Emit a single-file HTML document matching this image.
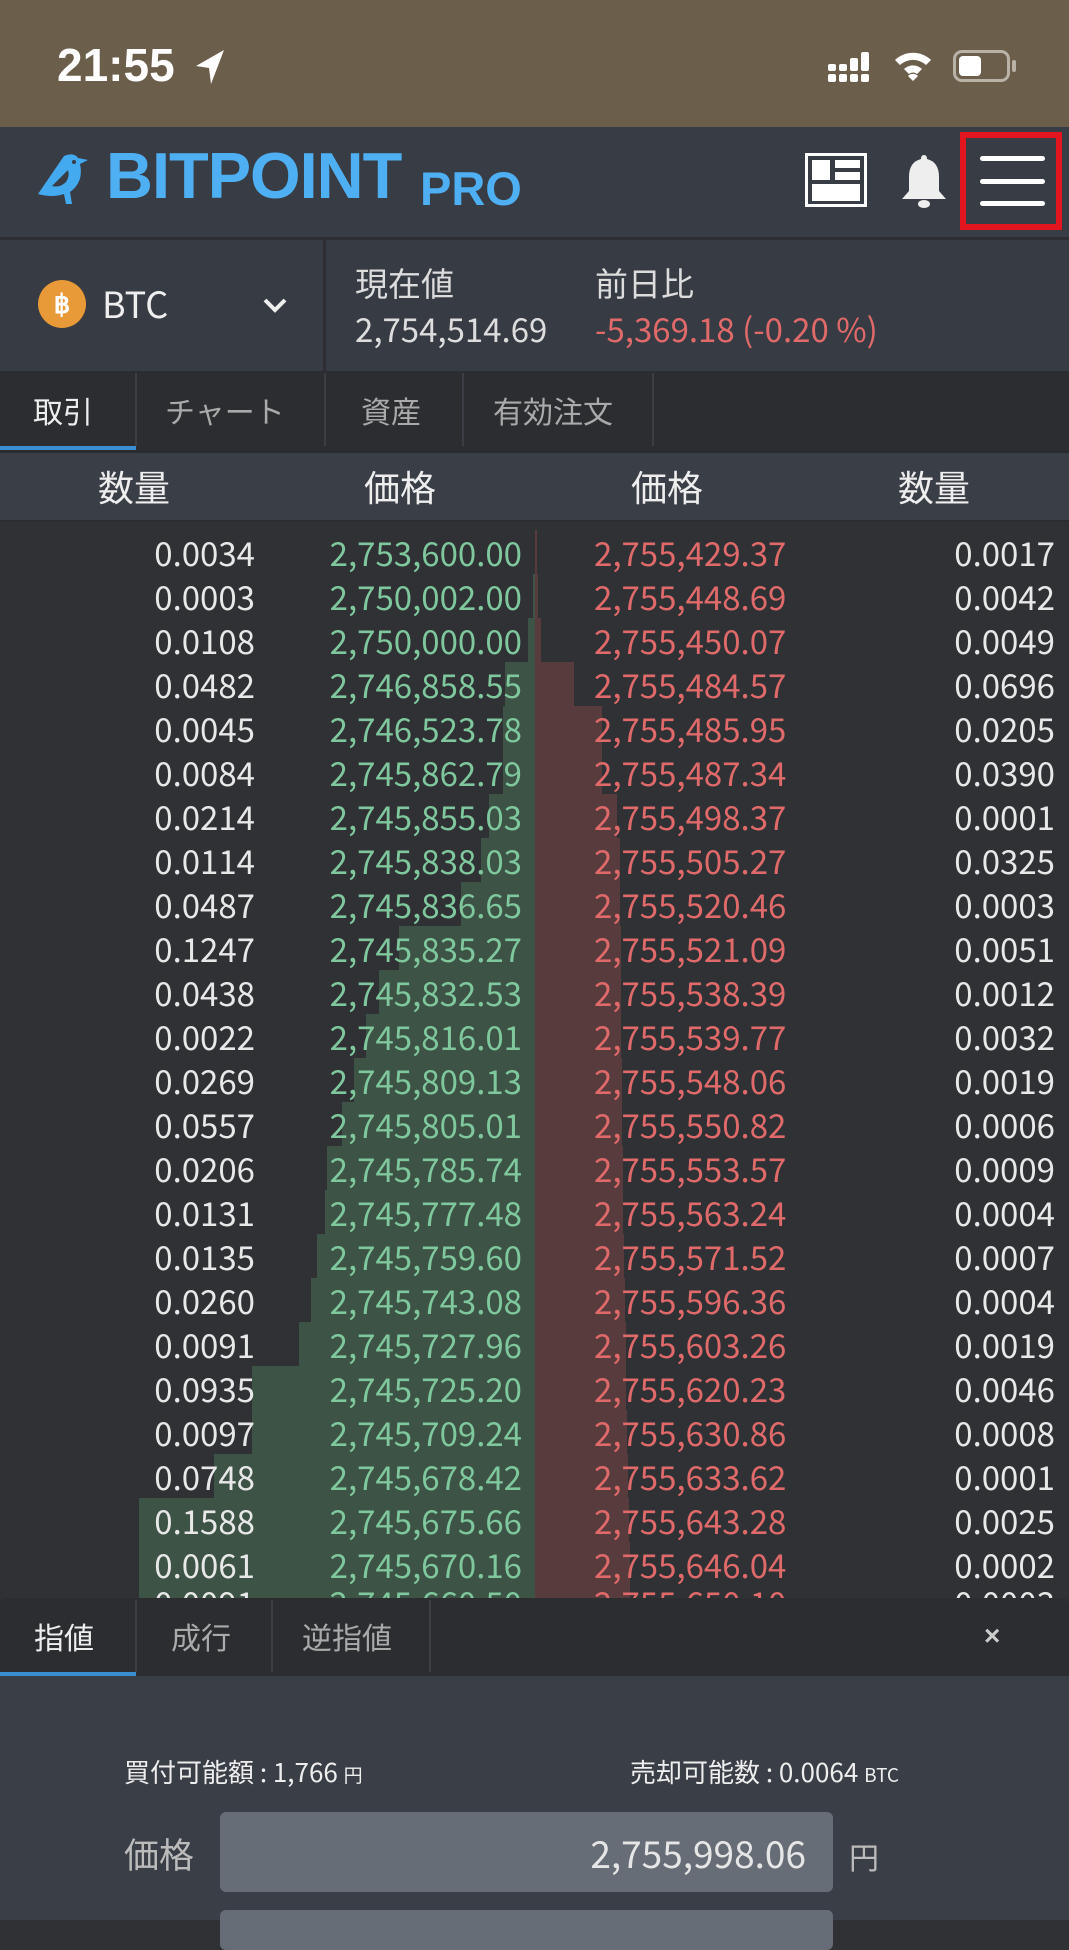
<!DOCTYPE html>
<html><head><meta charset="utf-8"><style>
*{margin:0;padding:0;box-sizing:border-box}
body{width:1069px;height:1920px;overflow:hidden;background:#2f3135;font-family:"Noto Sans CJK JP","Liberation Sans",sans-serif;color:#e8e8e8;position:relative}
.a{position:absolute;white-space:nowrap}
.row{position:absolute;left:0;width:1069px;height:44px;font-size:33px;line-height:44px}
.row .q{position:absolute;right:814px}
.row .g{position:absolute;right:547px;color:#7fc79c}
.row .r{position:absolute;left:594px;color:#e06a6a}
.row .q2{position:absolute;right:14px}
.gb{position:absolute;right:534px;height:44px;background:#3d5346}
.rb{position:absolute;left:535px;height:44px;background:#573b3d}
</style></head><body>
<div class="a" style="left:0;top:0;width:1069px;height:127px;background:#6b5e4b"></div>
<div class="a" style="left:57px;top:38px;font:bold 46px 'Liberation Sans',sans-serif;color:#fff">21:55</div>
<svg class="a" style="left:192px;top:48px" width="34" height="38" viewBox="0 0 34 38"><path d="M32 2 L4 18 L17 20 L19 36 Z" fill="#fff"/></svg>
<svg class="a" style="left:828px;top:50px" width="54" height="34"><g fill="#fff"><rect x="0" y="14" width="8" height="7" rx="2"/><rect x="0" y="24" width="8" height="8" rx="2"/><rect x="11" y="14" width="8" height="7" rx="2"/><rect x="11" y="24" width="8" height="8" rx="2"/><rect x="22" y="8" width="8" height="13" rx="2"/><rect x="22" y="24" width="8" height="8" rx="2"/><rect x="33" y="2" width="8" height="19" rx="2"/><rect x="33" y="24" width="8" height="8" rx="2"/></g></svg>
<svg class="a" style="left:893px;top:48px" width="40" height="34" viewBox="0 0 40 34"><path d="M2 12 A26 26 0 0 1 38 12 L33 17 A19 19 0 0 0 7 17 Z M11 21 A13 13 0 0 1 29 21 L24 26 A6 6 0 0 0 16 26 Z M20 33 L15 28 A7 7 0 0 1 25 28 Z" fill="#fff"/></svg>
<div class="a" style="left:953px;top:50px;width:57px;height:32px;border:3px solid #b9b2a6;border-radius:9px"></div>
<div class="a" style="left:959px;top:56px;width:22px;height:20px;background:#fff;border-radius:4px"></div>
<div class="a" style="left:1012px;top:60px;width:4px;height:12px;background:#b9b2a6;border-radius:2px"></div>

<div class="a" style="left:0;top:127px;width:1069px;height:110px;background:#383c44"></div>
<svg class="a" style="left:34px;top:152px" width="58" height="58" viewBox="0 0 58 58"><path d="M30 4 Q40 0 44 6 L54 8 L46 12 Q50 30 36 40 L38 52 L32 52 L30 42 Q18 46 4 42 Z M18 34 Q26 36 32 30 Q36 24 34 18 Z" fill="#44aaf0" fill-rule="evenodd"/><circle cx="40" cy="10" r="2" fill="#383c44"/></svg>
<div class="a" style="left:106px;top:138px;font:bold 65px 'Liberation Sans',sans-serif;color:#4eb0f2;letter-spacing:-1px">BITPOINT</div>
<div class="a" style="left:420px;top:161px;font:bold 47px 'Liberation Sans',sans-serif;color:#4eb0f2">PRO</div>
<div class="a" style="left:805px;top:153px;width:62px;height:54px;border:3px solid #fff;background:#383c44"></div>
<div class="a" style="left:812px;top:160px;width:18px;height:20px;background:#fff"></div>
<div class="a" style="left:835px;top:160px;width:25px;height:8px;background:#fff"></div>
<div class="a" style="left:835px;top:172px;width:25px;height:8px;background:#fff"></div>
<div class="a" style="left:812px;top:184px;width:48px;height:17px;background:#fff"></div>
<svg class="a" style="left:899px;top:153px" width="50" height="60" viewBox="0 0 50 60"><path d="M25 2 Q28 2 28 6 Q40 9 40 24 L40 38 L47 46 L3 46 L10 38 L10 24 Q10 9 22 6 Q22 2 25 2 Z" fill="#eee"/><ellipse cx="25" cy="51" rx="6" ry="4" fill="#eee"/></svg>
<div class="a" style="left:960px;top:132px;width:102px;height:98px;border:6px solid #e3161f"></div>
<div class="a" style="left:980px;top:156px;width:65px;height:5px;background:#fff;border-radius:3px"></div>
<div class="a" style="left:980px;top:179px;width:65px;height:5px;background:#fff;border-radius:3px"></div>
<div class="a" style="left:980px;top:201px;width:65px;height:5px;background:#fff;border-radius:3px"></div>

<div class="a" style="left:0;top:237px;width:1069px;height:134px;background:#373b43;border-top:3px solid #2c2e33"></div>
<div class="a" style="left:323px;top:240px;width:3px;height:131px;background:#2c2e33"></div>
<div class="a" style="left:38px;top:280px;width:48px;height:48px;border-radius:50%;background:#e89a38;color:#fff;font:bold 26px 'Liberation Sans',sans-serif;text-align:center;line-height:48px">฿</div>
<div class="a" style="left:102px;top:281px;font-size:36px;line-height:44px;color:#eee">BTC</div>
<svg class="a" style="left:262px;top:297px" width="26" height="18"><path d="M3 3 L13 13 L23 3" stroke="#eee" stroke-width="4" fill="none"/></svg>
<div class="a" style="left:355px;top:260px;font-size:33px;line-height:44px;color:#ddd">現在値</div>
<div class="a" style="left:355px;top:306px;font-size:33px;line-height:44px;color:#ddd">2,754,514.69</div>
<div class="a" style="left:595px;top:260px;font-size:33px;line-height:44px;color:#ddd">前日比</div>
<div class="a" style="left:595px;top:306px;font-size:33px;line-height:44px;color:#e06a6a">-5,369.18 (-0.20 %)</div>

<div class="a" style="left:0;top:371px;width:1069px;height:79px;background:#2b2d31"></div>
<div class="a" style="left:0;top:446px;width:136px;height:4px;background:#3a8fd0"></div>
<div class="a" style="left:135px;top:373px;width:2px;height:73px;background:#3b3e44"></div>
<div class="a" style="left:324px;top:373px;width:2px;height:73px;background:#3b3e44"></div>
<div class="a" style="left:462px;top:373px;width:2px;height:73px;background:#3b3e44"></div>
<div class="a" style="left:652px;top:373px;width:2px;height:73px;background:#3b3e44"></div>
<div class="a" style="left:33px;top:388px;font-size:30px;line-height:44px;color:#eee">取引</div>
<div class="a" style="left:165px;top:388px;font-size:30px;line-height:44px;color:#aaa">チャート</div>
<div class="a" style="left:361px;top:388px;font-size:30px;line-height:44px;color:#aaa">資産</div>
<div class="a" style="left:493px;top:388px;font-size:30px;line-height:44px;color:#aaa">有効注文</div>

<div class="a" style="left:0;top:450px;width:1069px;height:72px;background:#3a3e46;border-top:3px solid #2a2c30;border-bottom:2px solid #2a2c30"></div>
<div class="a" style="left:98px;top:462px;font-size:36px;line-height:48px;color:#eee">数量</div>
<div class="a" style="left:364px;top:462px;font-size:36px;line-height:48px;color:#eee">価格</div>
<div class="a" style="left:631px;top:462px;font-size:36px;line-height:48px;color:#eee">価格</div>
<div class="a" style="left:898px;top:462px;font-size:36px;line-height:48px;color:#eee">数量</div>

<div class="gb" style="top:574px;width:2px"></div>
<div class="gb" style="top:618px;width:7px"></div>
<div class="gb" style="top:662px;width:30px"></div>
<div class="gb" style="top:706px;width:32px"></div>
<div class="gb" style="top:750px;width:32px"></div>
<div class="gb" style="top:794px;width:46px"></div>
<div class="gb" style="top:838px;width:54px"></div>
<div class="gb" style="top:882px;width:74px"></div>
<div class="gb" style="top:926px;width:136px"></div>
<div class="gb" style="top:970px;width:156px"></div>
<div class="gb" style="top:1014px;width:169px"></div>
<div class="gb" style="top:1058px;width:181px"></div>
<div class="gb" style="top:1102px;width:193px"></div>
<div class="gb" style="top:1146px;width:208px"></div>
<div class="gb" style="top:1190px;width:210px"></div>
<div class="gb" style="top:1234px;width:218px"></div>
<div class="gb" style="top:1278px;width:224px"></div>
<div class="gb" style="top:1322px;width:236px"></div>
<div class="gb" style="top:1366px;width:283px"></div>
<div class="gb" style="top:1410px;width:283px"></div>
<div class="gb" style="top:1454px;width:321px"></div>
<div class="gb" style="top:1498px;width:396px"></div>
<div class="gb" style="top:1542px;width:396px;height:56px"></div>
<div class="rb" style="top:530px;width:2px"></div>
<div class="rb" style="top:574px;width:3px"></div>
<div class="rb" style="top:618px;width:6px"></div>
<div class="rb" style="top:662px;width:39px"></div>
<div class="rb" style="top:706px;width:67px"></div>
<div class="rb" style="top:750px;width:67px"></div>
<div class="rb" style="top:794px;width:82px"></div>
<div class="rb" style="top:838px;width:85px"></div>
<div class="rb" style="top:882px;width:85px"></div>
<div class="rb" style="top:926px;width:86px"></div>
<div class="rb" style="top:970px;width:86px"></div>
<div class="rb" style="top:1014px;width:86px"></div>
<div class="rb" style="top:1058px;width:87px"></div>
<div class="rb" style="top:1102px;width:87px"></div>
<div class="rb" style="top:1146px;width:88px"></div>
<div class="rb" style="top:1190px;width:88px"></div>
<div class="rb" style="top:1234px;width:89px"></div>
<div class="rb" style="top:1278px;width:90px"></div>
<div class="rb" style="top:1322px;width:91px"></div>
<div class="rb" style="top:1366px;width:91px"></div>
<div class="rb" style="top:1410px;width:92px"></div>
<div class="rb" style="top:1454px;width:93px"></div>
<div class="rb" style="top:1498px;width:94px"></div>
<div class="rb" style="top:1542px;width:95px;height:56px"></div>

<div class="row" style="top:530px"><span class="q">0.0034</span><span class="g">2,753,600.00</span><span class="r">2,755,429.37</span><span class="q2">0.0017</span></div>
<div class="row" style="top:574px"><span class="q">0.0003</span><span class="g">2,750,002.00</span><span class="r">2,755,448.69</span><span class="q2">0.0042</span></div>
<div class="row" style="top:618px"><span class="q">0.0108</span><span class="g">2,750,000.00</span><span class="r">2,755,450.07</span><span class="q2">0.0049</span></div>
<div class="row" style="top:662px"><span class="q">0.0482</span><span class="g">2,746,858.55</span><span class="r">2,755,484.57</span><span class="q2">0.0696</span></div>
<div class="row" style="top:706px"><span class="q">0.0045</span><span class="g">2,746,523.78</span><span class="r">2,755,485.95</span><span class="q2">0.0205</span></div>
<div class="row" style="top:750px"><span class="q">0.0084</span><span class="g">2,745,862.79</span><span class="r">2,755,487.34</span><span class="q2">0.0390</span></div>
<div class="row" style="top:794px"><span class="q">0.0214</span><span class="g">2,745,855.03</span><span class="r">2,755,498.37</span><span class="q2">0.0001</span></div>
<div class="row" style="top:838px"><span class="q">0.0114</span><span class="g">2,745,838.03</span><span class="r">2,755,505.27</span><span class="q2">0.0325</span></div>
<div class="row" style="top:882px"><span class="q">0.0487</span><span class="g">2,745,836.65</span><span class="r">2,755,520.46</span><span class="q2">0.0003</span></div>
<div class="row" style="top:926px"><span class="q">0.1247</span><span class="g">2,745,835.27</span><span class="r">2,755,521.09</span><span class="q2">0.0051</span></div>
<div class="row" style="top:970px"><span class="q">0.0438</span><span class="g">2,745,832.53</span><span class="r">2,755,538.39</span><span class="q2">0.0012</span></div>
<div class="row" style="top:1014px"><span class="q">0.0022</span><span class="g">2,745,816.01</span><span class="r">2,755,539.77</span><span class="q2">0.0032</span></div>
<div class="row" style="top:1058px"><span class="q">0.0269</span><span class="g">2,745,809.13</span><span class="r">2,755,548.06</span><span class="q2">0.0019</span></div>
<div class="row" style="top:1102px"><span class="q">0.0557</span><span class="g">2,745,805.01</span><span class="r">2,755,550.82</span><span class="q2">0.0006</span></div>
<div class="row" style="top:1146px"><span class="q">0.0206</span><span class="g">2,745,785.74</span><span class="r">2,755,553.57</span><span class="q2">0.0009</span></div>
<div class="row" style="top:1190px"><span class="q">0.0131</span><span class="g">2,745,777.48</span><span class="r">2,755,563.24</span><span class="q2">0.0004</span></div>
<div class="row" style="top:1234px"><span class="q">0.0135</span><span class="g">2,745,759.60</span><span class="r">2,755,571.52</span><span class="q2">0.0007</span></div>
<div class="row" style="top:1278px"><span class="q">0.0260</span><span class="g">2,745,743.08</span><span class="r">2,755,596.36</span><span class="q2">0.0004</span></div>
<div class="row" style="top:1322px"><span class="q">0.0091</span><span class="g">2,745,727.96</span><span class="r">2,755,603.26</span><span class="q2">0.0019</span></div>
<div class="row" style="top:1366px"><span class="q">0.0935</span><span class="g">2,745,725.20</span><span class="r">2,755,620.23</span><span class="q2">0.0046</span></div>
<div class="row" style="top:1410px"><span class="q">0.0097</span><span class="g">2,745,709.24</span><span class="r">2,755,630.86</span><span class="q2">0.0008</span></div>
<div class="row" style="top:1454px"><span class="q">0.0748</span><span class="g">2,745,678.42</span><span class="r">2,755,633.62</span><span class="q2">0.0001</span></div>
<div class="row" style="top:1498px"><span class="q">0.1588</span><span class="g">2,745,675.66</span><span class="r">2,755,643.28</span><span class="q2">0.0025</span></div>
<div class="row" style="top:1542px"><span class="q">0.0061</span><span class="g">2,745,670.16</span><span class="r">2,755,646.04</span><span class="q2">0.0002</span></div>
<div class="row" style="top:1580px"><span class="q">0.0091</span><span class="g">2,745,660.50</span><span class="r">2,755,650.10</span><span class="q2">0.0003</span></div>

<div class="a" style="left:0;top:1598px;width:1069px;height:78px;background:#2b2d31;border-radius:6px 6px 0 0"></div>
<div class="a" style="left:0;top:1672px;width:136px;height:4px;background:#3a8fd0"></div>
<div class="a" style="left:135px;top:1600px;width:2px;height:72px;background:#3b3e44"></div>
<div class="a" style="left:271px;top:1600px;width:2px;height:72px;background:#3b3e44"></div>
<div class="a" style="left:429px;top:1600px;width:2px;height:72px;background:#3b3e44"></div>
<div class="a" style="left:34px;top:1614px;font-size:30px;line-height:44px;color:#eee">指値</div>
<div class="a" style="left:171px;top:1614px;font-size:30px;line-height:44px;color:#aaa">成行</div>
<div class="a" style="left:302px;top:1614px;font-size:30px;line-height:44px;color:#aaa">逆指値</div>
<div class="a" style="left:984px;top:1614px;font:bold 28px 'Liberation Sans',sans-serif;line-height:44px;color:#ccc">×</div>

<div class="a" style="left:0;top:1676px;width:1069px;height:244px;background:#3a3e46"></div>
<div class="a" style="left:124px;top:1754px;font-size:26px;line-height:36px;color:#eee">買付可能額 : 1,766 <span style="font-size:19px">円</span></div>
<div class="a" style="left:630px;top:1754px;font-size:26px;line-height:36px;color:#eee">売却可能数 : 0.0064 <span style="font-size:19px">BTC</span></div>
<div class="a" style="left:124px;top:1830px;font-size:35px;line-height:48px;color:#bbb">価格</div>
<div class="a" style="left:220px;top:1812px;width:613px;height:80px;background:#676d76;border-radius:6px"></div>
<div class="a" style="left:220px;top:1828px;width:586px;text-align:right;font-size:37px;line-height:48px;color:#e6e6e6">2,755,998.06</div>
<div class="a" style="left:849px;top:1834px;font-size:30px;line-height:44px;color:#bbb">円</div>
<div class="a" style="left:220px;top:1910px;width:613px;height:40px;background:#676d76;border-radius:6px"></div>
</body></html>
